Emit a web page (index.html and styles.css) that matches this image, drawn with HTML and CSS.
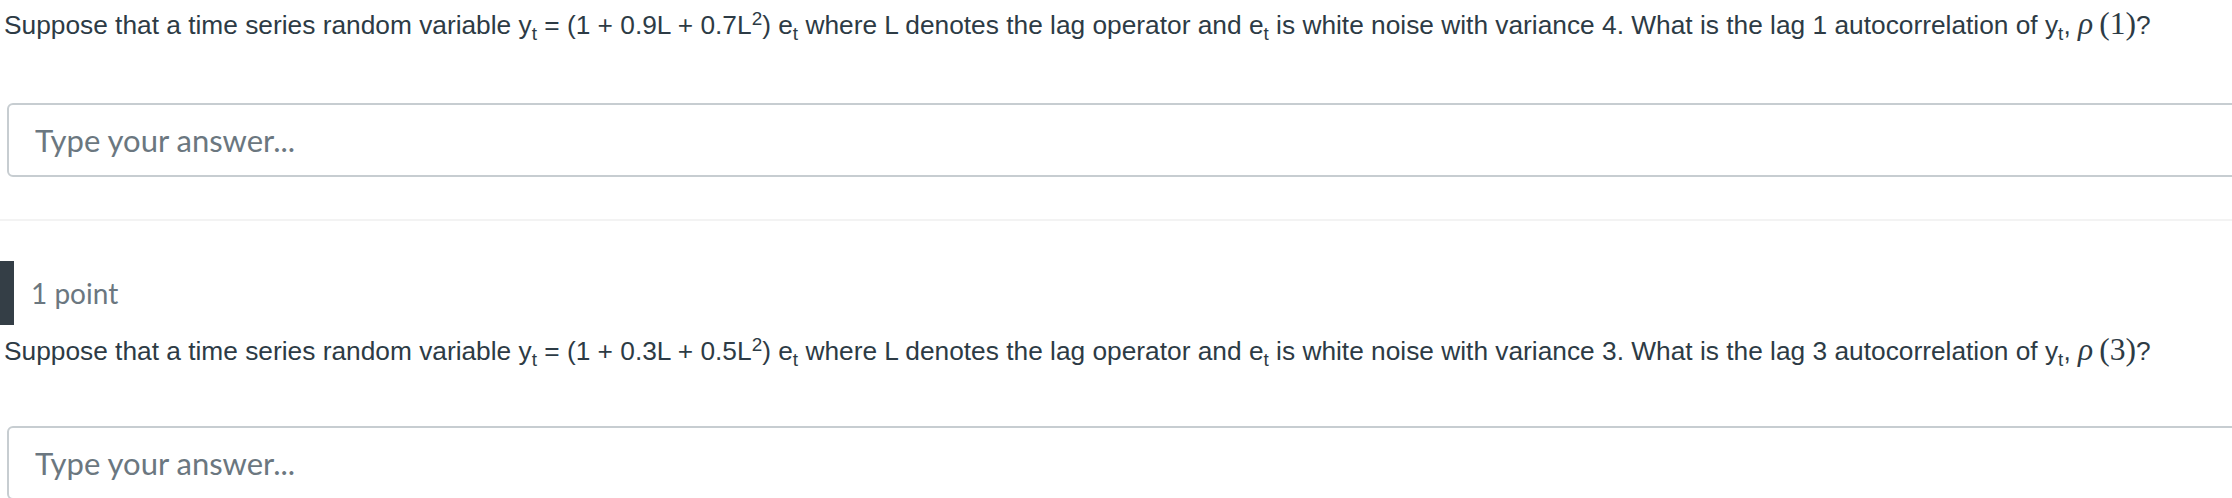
FILE: index.html
```html
<!DOCTYPE html>
<html lang="en">
<head>
<meta charset="utf-8">
<title>Quiz</title>
<link rel="stylesheet" href="styles.css">
</head>
<body>
<main class="quiz">
  <section class="question first">
    <p class="q-text">Suppose that a time series random variable y<sub>t</sub> = (1 + 0.9L + 0.7L<sup>2</sup>) e<sub>t</sub> where L denotes the lag operator and e<sub>t</sub> is white noise with variance 4. What is the lag 1 autocorrelation of y<sub>t</sub>, <span class="math"><i>ρ</i><span class="mn">(1)</span></span>?</p>
    <input class="answer" type="text" placeholder="Type your answer...">
  </section>
  <hr class="divider">
  <section class="question">
    <div class="q-header"><span class="points">1 point</span></div>
    <p class="q-text">Suppose that a time series random variable y<sub>t</sub> = (1 + 0.3L + 0.5L<sup>2</sup>) e<sub>t</sub> where L denotes the lag operator and e<sub>t</sub> is white noise with variance 3. What is the lag 3 autocorrelation of y<sub>t</sub>, <span class="math"><i>ρ</i><span class="mn">(3)</span></span>?</p>
    <input class="answer later" type="text" placeholder="Type your answer...">
  </section>
</main>
</body>
</html>
```

FILE: styles.css
```css
html, body {
  margin: 0;
  padding: 0;
  background: #ffffff;
  overflow: hidden;
}

.quiz {
  display: flex;
  flex-direction: column;
  width: 100%;
}

.question {
  display: flex;
  flex-direction: column;
}

.question.first {
  padding-top: 7px;
}

.q-text {
  margin: 0;
  padding-left: 4px;
  font-family: "Liberation Sans", Arial, sans-serif;
  font-size: 26.3px;
  line-height: 34px;
  color: #2d3b45;
  white-space: nowrap;
}

.q-text sub,
.q-text sup {
  font-size: 0.72em;
  line-height: 0;
}

.q-text sub {
  vertical-align: -0.3em;
}

.q-text sup {
  vertical-align: 0.45em;
}

.math i {
  font-family: "Liberation Serif", "DejaVu Serif", serif;
  font-style: italic;
  font-size: 1.2em;
}

.math .mn {
  font-family: "Liberation Serif", "DejaVu Serif", serif;
  font-size: 1.2em;
  margin-left: 6px;
}

.answer {
  display: block;
  box-sizing: border-box;
  margin: 61px 0 0 7px;
  width: calc(100% + 60px);
  height: 74px;
  padding: 0 26px;
  border: 2px solid #c7cdd1;
  border-radius: 6px;
  background: #ffffff;
  font-family: Lato, "Liberation Sans", sans-serif;
  font-size: 31px;
  color: #2d3b45;
  outline: none;
}

.answer.later {
  margin-top: 58px;
}

.answer::placeholder {
  color: #6b7780;
  opacity: 1;
}

.divider {
  margin: 42px 0 0 0;
  height: 2px;
  border: 0;
  background: #f3f3f3;
}

.q-header {
  display: flex;
  align-items: flex-start;
  box-sizing: border-box;
  margin-top: 40px;
  height: 64px;
  padding: 15px 0 0 17px;
  border-left: 14px solid #343e46;
}

.points {
  font-family: Lato, "Liberation Sans", sans-serif;
  font-size: 28px;
  color: #6b7780;
}

.q-header + .q-text {
  margin-top: 8px;
}
```
